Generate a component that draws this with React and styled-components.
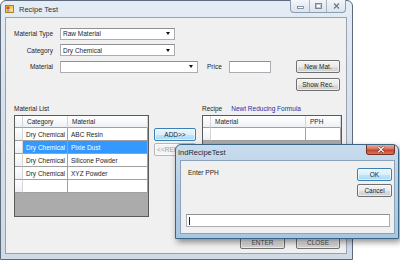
import React from 'react';
import styled, { createGlobalStyle } from 'styled-components';

const GlobalStyle = createGlobalStyle`
  html, body { margin: 0; padding: 0; background: #fff; }
  body {
    font-family: "Liberation Sans", Arial, sans-serif;
    font-size: 6.5px;
    color: #1e1e1e;
  }
  * { box-sizing: border-box; }
`;

const Desktop = styled.div`
  position: relative;
  width: 400px;
  height: 262px;
  overflow: hidden;
  background: #fff;
`;

const Window = styled.div`
  width: 353px;
  height: 260px;
  display: flex;
  flex-direction: column;
  padding: 0 5px 5px 4px;
  border: 1px solid #5d6b7c;
  border-radius: 6px 6px 0 0;
  background: linear-gradient(180deg, #e4ecf5 0%, #d6e1ed 40%, #cfdae7 100%);
`;

const TitleBar = styled.div`
  height: 16px;
  display: flex;
  align-items: center;
  gap: 4px;
  flex-shrink: 0;
`;

const TitleText = styled.span`
  font-size: 7.5px;
  color: #2b3340;
`;

const Controls = styled.div`
  margin-left: auto;
  margin-right: 1px;
  align-self: flex-start;
  margin-top: -1px;
  display: flex;
  height: 13px;
  border: 1px solid #8c9db2;
  border-top: none;
  border-radius: 0 0 4px 4px;
  background: linear-gradient(180deg, #f3f6fa, #dbe3ec);
  overflow: hidden;
`;

const CtrlBtn = styled.div`
  width: ${(p) => p.$w}px;
  display: flex;
  align-items: center;
  justify-content: center;
  & + & { border-left: 1px solid #a7b5c6; }
`;

const Client = styled.div`
  flex: 1;
  display: flex;
  flex-direction: column;
  background: #f0f0f0;
  border: 1px solid #97a3b3;
`;

const TopSection = styled.div`
  display: flex;
  height: 74px;
  padding: 9px 6px 0 0;
`;

const Fields = styled.div`
  display: grid;
  grid-template-columns: 47px auto;
  grid-auto-rows: 13px;
  column-gap: 7px;
  row-gap: 3.5px;
  align-items: center;
`;

const Label = styled.span`
  text-align: ${(p) => (p.$right ? 'right' : 'left')};
  margin-left: ${(p) => p.$ml || 0}px;
  white-space: nowrap;
`;

const Combo = styled.div`
  width: ${(p) => p.$w}px;
  height: 12px;
  display: flex;
  align-items: center;
  justify-content: space-between;
  padding: 0 4px 0 2px;
  background: #fff;
  border: 1px solid #abadb3;
  border-top-color: #8e9094;
`;

const Arrow = styled.span`
  width: 0;
  height: 0;
  border-left: 2.5px solid transparent;
  border-right: 2.5px solid transparent;
  border-top: 3px solid #111;
`;

const FieldLine = styled.div`
  display: flex;
  align-items: center;
`;

const TextBox = styled.div`
  width: ${(p) => (p.$w ? `${p.$w}px` : 'auto')};
  height: ${(p) => p.$h || 12}px;
  margin-left: ${(p) => p.$ml || 0}px;
  background: #fff;
  border: 1px solid #abadb3;
  border-top-color: #8e9094;
  display: flex;
  align-items: center;
  padding-left: 2px;
`;

const Caret = styled.span`
  width: 1px;
  height: 8px;
  background: #222;
`;

const ButtonCol = styled.div`
  margin-left: auto;
  padding-top: ${(p) => p.$pt || 0}px;
  display: flex;
  flex-direction: column;
  gap: ${(p) => p.$gap || 5}px;
`;

const Button = styled.div`
  width: ${(p) => p.$w || 44}px;
  height: 13px;
  display: flex;
  align-items: center;
  justify-content: center;
  white-space: nowrap;
  overflow: hidden;
  border-radius: 2px;
  border: 1px solid ${(p) => (p.$focus ? '#3c7fb1' : p.$disabled ? '#b5b8bb' : '#707070')};
  color: ${(p) => (p.$disabled ? '#a0a0a0' : p.$dim ? '#4c4c4c' : '#1e1e1e')};
  background: ${(p) =>
    p.$focus
      ? 'linear-gradient(180deg, #eaf6fd 0%, #d9f0fc 50%, #bee6fd 51%, #a7d9f5 100%)'
      : p.$disabled
      ? '#f4f4f4'
      : 'linear-gradient(180deg, #f2f2f2 0%, #ebebeb 50%, #dddddd 51%, #cfcfcf 100%)'};
  box-shadow: inset 0 0 0 1px rgba(255, 255, 255, 0.6);
`;

const Middle = styled.div`
  display: flex;
  padding: 12px 0 0 8px;
`;

const ListCol = styled.div`
  width: ${(p) => p.$w}px;
  margin-left: ${(p) => p.$ml || 0}px;
  display: flex;
  flex-direction: column;
`;

const ListLabel = styled.div`
  height: 9px;
  margin-bottom: 2px;
  display: flex;
  gap: 9px;
  align-items: center;
`;

const Link = styled.span`
  color: #2233aa;
`;

const GridFrame = styled.div`
  height: ${(p) => p.$h}px;
  border: 1px solid #5a5a5a;
  background: #ababab;
  overflow: hidden;
`;

const GridRow = styled.div`
  display: grid;
  grid-template-columns: ${(p) => p.$cols};
  height: ${(p) => p.$h || 13}px;
`;

const HeadCell = styled.div`
  display: flex;
  align-items: center;
  padding-left: ${(p) => p.$pl ?? 4}px;
  background: linear-gradient(180deg, #ffffff 0%, #f7f8fa 50%, #eef0f3 100%);
  border-right: 1px solid #d3d5d8;
  border-bottom: 1px solid #a0a0a0;
  white-space: nowrap;
  overflow: hidden;
`;

const Cell = styled.div`
  display: flex;
  align-items: center;
  padding-left: 3px;
  white-space: nowrap;
  overflow: hidden;
  background: ${(p) => (p.$sel ? '#3399ff' : '#fff')};
  color: ${(p) => (p.$sel ? '#fff' : '#1e1e1e')};
  border-right: 1px solid #a0a0a0;
  border-bottom: 1px solid #a0a0a0;
`;

const BottomBar = styled.div`
  margin-top: auto;
  display: flex;
  justify-content: flex-end;
  gap: 11px;
  padding: 0 6px 4px 0;
`;

const Dialog = styled.div`
  position: absolute;
  left: 175px;
  top: 144px;
  width: 224px;
  height: 95px;
  display: flex;
  flex-direction: column;
  padding: 0 3px 4px 4px;
  border: 1px solid #3b6584;
  border-radius: 6px 6px 0 0;
  background: linear-gradient(180deg, #c9dcee 0%, #b6cfe6 45%, #a9c6e1 100%);
  box-shadow: 2px 3px 6px rgba(0, 0, 0, 0.45);
`;

const DialogTitle = styled.div`
  height: 15px;
  display: flex;
  align-items: center;
  padding-left: 0;
  margin-left: -2px;
`;

const DialogTitleText = styled.span`
  font-size: 7.5px;
  color: #1f2a36;
`;

const CloseX = styled.div`
  margin-left: auto;
  margin-right: 0;
  align-self: flex-start;
  width: 29px;
  height: 10px;
  display: flex;
  align-items: center;
  justify-content: center;
  border: 1px solid #7a2e22;
  border-top: none;
  border-radius: 0 0 3px 3px;
  background: linear-gradient(180deg, #eaa897 0%, #d7725e 45%, #c4402a 55%, #d8785a 100%);
`;

const DialogClient = styled.div`
  flex: 1;
  display: flex;
  flex-direction: column;
  background: #f0f0f0;
  border: 1px solid #8aa3bb;
  padding: 6px 2px 6px 5px;
`;

const DialogTop = styled.div`
  display: flex;
  justify-content: space-between;
  padding-left: 2px;
`;

const PromptText = styled.span`
  margin-top: 2px;
`;

const dataRows = [
  { cat: 'Dry Chemical', mat: 'ABC Resin' },
  { cat: 'Dry Chemical', mat: 'Pixie Dust', sel: true },
  { cat: 'Dry Chemical', mat: 'Silicone Powder' },
  { cat: 'Dry Chemical', mat: 'XYZ Powder' },
  { cat: '', mat: '' },
];

const listCols = '8px 45px 80px';
const recipeCols = '8px 95px 35px';

const AppIcon = () => (
  <svg width="10" height="10" viewBox="0 0 10 10">
    <rect x="0.5" y="1.5" width="8" height="7" fill="#f2c94c" stroke="#9a6a10" strokeWidth="0.8" />
    <rect x="1.5" y="2.5" width="3" height="2.5" fill="#e14b2b" />
    <rect x="5" y="4.5" width="3" height="3" fill="#f7e08a" />
    <rect x="2" y="5.5" width="2" height="2" fill="#7aa0d8" />
  </svg>
);

export default function App() {
  return (
    <Desktop>
      <GlobalStyle />
      <Window>
        <TitleBar>
          <AppIcon />
          <TitleText>Recipe Test</TitleText>
          <Controls>
            <CtrlBtn $w={18}>
              <svg width="7" height="5" viewBox="0 0 7 5">
                <rect x="0.5" y="2.5" width="6" height="2" fill="#fff" stroke="#6c7c8f" strokeWidth="0.8" />
              </svg>
            </CtrlBtn>
            <CtrlBtn $w={17}>
              <svg width="7" height="6" viewBox="0 0 7 6">
                <rect x="0.5" y="0.5" width="6" height="5" fill="none" stroke="#6c7c8f" strokeWidth="0.9" />
                <rect x="1.5" y="1.7" width="4" height="3" fill="#fff" stroke="#9aa8b8" strokeWidth="0.6" />
              </svg>
            </CtrlBtn>
            <CtrlBtn $w={19}>
              <svg width="7" height="6" viewBox="0 0 7 6">
                <path d="M1 0.5 L6 5.5 M6 0.5 L1 5.5" stroke="#6c7c8f" strokeWidth="1.3" />
              </svg>
            </CtrlBtn>
          </Controls>
        </TitleBar>
        <Client>
          <TopSection>
            <Fields>
              <Label $right>Material Type</Label>
              <Combo $w={115}>
                <span>Raw Material</span>
                <Arrow />
              </Combo>
              <Label $right>Category</Label>
              <Combo $w={115}>
                <span>Dry Chemical</span>
                <Arrow />
              </Combo>
              <Label $right>Material</Label>
              <FieldLine>
                <Combo $w={138}>
                  <span />
                  <Arrow />
                </Combo>
                <Label $ml={9}>Price</Label>
                <TextBox $w={42} $ml={7} />
              </FieldLine>
            </Fields>
            <ButtonCol $pt={33}>
              <Button>New Mat.</Button>
              <Button>Show Rec.</Button>
            </ButtonCol>
          </TopSection>
          <Middle>
            <ListCol $w={135}>
              <ListLabel>Material List</ListLabel>
              <GridFrame $h={102}>
                <GridRow $cols={listCols} $h={12}>
                  <HeadCell $pl={0} />
                  <HeadCell>Category</HeadCell>
                  <HeadCell>Material</HeadCell>
                </GridRow>
                {dataRows.map((r, i) => (
                  <GridRow key={i} $cols={listCols}>
                    <HeadCell $pl={0} />
                    <Cell $sel={r.sel}>{r.cat}</Cell>
                    <Cell $sel={r.sel}>{r.mat}</Cell>
                  </GridRow>
                ))}
              </GridFrame>
            </ListCol>
            <ButtonCol as="div" style={{ marginLeft: 5 }} $pt={24} $gap={2}>
              <Button $w={42} $focus>ADD&gt;&gt;</Button>
              <Button $w={42} $disabled>&lt;&lt;REMOVE</Button>
            </ButtonCol>
            <ListCol $w={140} $ml={6}>
              <ListLabel>
                <span>Recipe</span>
                <Link>Newt Reducing Formula</Link>
              </ListLabel>
              <GridFrame $h={112}>
                <GridRow $cols={recipeCols} $h={12}>
                  <HeadCell $pl={0} />
                  <HeadCell>Material</HeadCell>
                  <HeadCell>PPH</HeadCell>
                </GridRow>
                <GridRow $cols={recipeCols}>
                  <HeadCell $pl={0} />
                  <Cell />
                  <Cell />
                </GridRow>
              </GridFrame>
            </ListCol>
          </Middle>
          <BottomBar>
            <Button $w={45} $dim>ENTER</Button>
            <Button $dim>CLOSE</Button>
          </BottomBar>
        </Client>
      </Window>

      <Dialog>
        <DialogTitle>
          <DialogTitleText>IndRecipeTest</DialogTitleText>
          <CloseX>
            <svg width="8" height="7" viewBox="0 0 8 7">
              <path d="M1.2 0.8 L6.8 6.2 M6.8 0.8 L1.2 6.2" stroke="#5a1a10" strokeWidth="2.2" />
              <path d="M1.2 0.8 L6.8 6.2 M6.8 0.8 L1.2 6.2" stroke="#fff" strokeWidth="1.2" />
            </svg>
          </CloseX>
        </DialogTitle>
        <DialogClient>
          <DialogTop>
            <PromptText>Enter PPH</PromptText>
            <ButtonCol $pt={1} $gap={3}>
              <Button $w={35} $focus>OK</Button>
              <Button $w={35}>Cancel</Button>
            </ButtonCol>
          </DialogTop>
          <TextBox $h={13} style={{ marginTop: 'auto', marginRight: 2 }}>
            <Caret />
          </TextBox>
        </DialogClient>
      </Dialog>
    </Desktop>
  );
}
